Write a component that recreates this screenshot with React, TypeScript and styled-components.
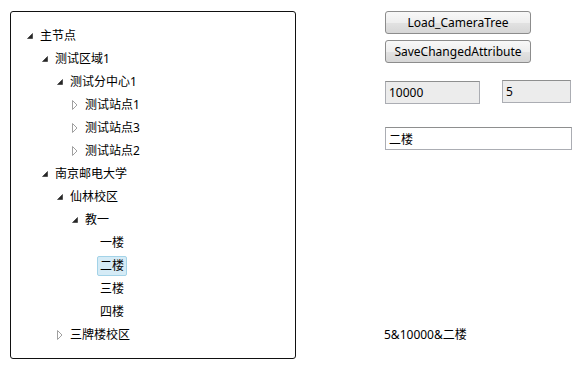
import styled, { createGlobalStyle } from "styled-components";

type Node = {
  label: string;
  children?: Node[];
  expanded?: boolean;
  selected?: boolean;
};

const tree: Node[] = [
  {
    label: "主节点",
    expanded: true,
    children: [
      {
        label: "测试区域1",
        expanded: true,
        children: [
          {
            label: "测试分中心1",
            expanded: true,
            children: [
              { label: "测试站点1", children: [{ label: "x" }] },
              { label: "测试站点3", children: [{ label: "x" }] },
              { label: "测试站点2", children: [{ label: "x" }] },
            ],
          },
        ],
      },
      {
        label: "南京邮电大学",
        expanded: true,
        children: [
          {
            label: "仙林校区",
            expanded: true,
            children: [
              {
                label: "教一",
                expanded: true,
                children: [
                  { label: "一楼" },
                  { label: "二楼", selected: true },
                  { label: "三楼" },
                  { label: "四楼" },
                ],
              },
            ],
          },
          { label: "三牌楼校区", children: [{ label: "x" }] },
        ],
      },
    ],
  },
];

const GlobalStyle = createGlobalStyle`
  html, body {
    margin: 0;
    padding: 0;
    background: #fff;
  }
  body {
    font-family: "Noto Sans", "Noto Sans CJK SC", sans-serif;
    font-size: 12px;
    color: #000;
  }
`;

const Page = styled.div`
  display: flex;
  align-items: flex-start;
  width: 585px;
  height: 370px;
  padding: 11px 0 0 10px;
  box-sizing: border-box;
`;

const TreePanel = styled.div`
  width: 286px;
  height: 348px;
  box-sizing: border-box;
  border: 1px solid #111;
  border-radius: 3px;
  padding-top: 12px;
`;

const Row = styled.div<{ $level: number }>`
  display: flex;
  align-items: center;
  height: 23px;
  padding-left: ${(p) => 11 + p.$level * 15}px;
`;

const Expander = styled.span`
  width: 15px;
  height: 20px;
  display: flex;
  align-items: center;
  justify-content: center;
`;

const Header = styled.span<{ $selected?: boolean }>`
  height: 20px;
  line-height: 18px;
  box-sizing: border-box;
  padding: 0 2px;
  border: 1px solid ${(p) => (p.$selected ? "#a3d3e8" : "transparent")};
  border-radius: 2px;
  background: ${(p) => (p.$selected ? "#d5ebf6" : "transparent")};
  white-space: nowrap;
`;

const RightColumn = styled.div`
  display: flex;
  flex-direction: column;
  margin-left: 89px;
  width: 187px;
`;

const Button = styled.button`
  width: 146px;
  height: 23px;
  margin-bottom: 6px;
  padding: 0;
  border: 1px solid #8c8c8c;
  border-radius: 3px;
  background: linear-gradient(#f8f8f8 0%, #eeeeee 50%, #e2e2e2 52%, #d6d6d6 100%);
  font-family: "Noto Sans", sans-serif;
  font-size: 12px;
  color: #000;
`;

const InputRow = styled.div`
  display: flex;
  align-items: flex-start;
  margin-top: 11px;
`;

const TextBox = styled.input<{ $width: number; $disabled?: boolean; $top?: number }>`
  width: ${(p) => p.$width}px;
  height: 23px;
  margin-top: ${(p) => p.$top ?? 0}px;
  box-sizing: border-box;
  padding: 0 3px;
  border: 1px solid #abadb3;
  border-top-color: #8e8f8f;
  background: ${(p) => (p.$disabled ? "#ececec" : "#fff")};
  font-family: "Noto Sans", "Noto Sans CJK SC", sans-serif;
  font-size: 12px;
  color: #000;
  outline: none;
`;

const Gap = styled.span<{ $w: number }>`
  width: ${(p) => p.$w}px;
`;

const ResultLabel = styled.div`
  margin-top: 177px;
  margin-left: -1px;
  line-height: 16px;
`;

function Arrow({ expanded }: { expanded: boolean }) {
  return expanded ? (
    <svg width="6" height="6" viewBox="0 0 6 6">
      <polygon points="5.5,0.5 5.5,5.5 0.5,5.5" fill="#262626" stroke="#262626" strokeWidth="0.6" />
    </svg>
  ) : (
    <svg width="6" height="10" viewBox="0 0 6 10">
      <polygon points="0.5,0.5 0.5,9.5 5,5" fill="#fff" stroke="#a0a0a0" strokeWidth="1" />
    </svg>
  );
}

function TreeNode({ node, level }: { node: Node; level: number }) {
  const hasChildren = !!node.children && node.children.length > 0;
  return (
    <>
      <Row $level={level}>
        <Expander>{hasChildren ? <Arrow expanded={!!node.expanded} /> : null}</Expander>
        <Header $selected={node.selected}>{node.label}</Header>
      </Row>
      {node.expanded &&
        node.children?.map((c, i) => <TreeNode key={i} node={c} level={level + 1} />)}
    </>
  );
}

export default function App() {
  return (
    <>
      <GlobalStyle />
      <Page>
        <TreePanel>
          {tree.map((n, i) => (
            <TreeNode key={i} node={n} level={0} />
          ))}
        </TreePanel>
        <RightColumn>
          <Button>Load_CameraTree</Button>
          <Button>SaveChangedAttribute</Button>
          <InputRow>
            <TextBox $width={95} $disabled $top={1} readOnly value="10000" />
            <Gap $w={22} />
            <TextBox $width={69} $disabled readOnly value="5" />
          </InputRow>
          <TextBox $width={187} $top={23} readOnly value="二楼" />
          <ResultLabel>5&amp;10000&amp;二楼</ResultLabel>
        </RightColumn>
      </Page>
    </>
  );
}
